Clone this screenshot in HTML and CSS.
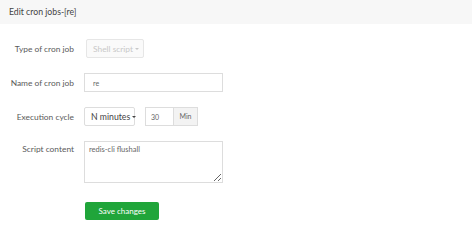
FILE: index.html
```html
<!DOCTYPE html>
<html lang="en">
<head>
    <meta charset="UTF-8">
    <meta name="viewport" content="width=device-width, initial-scale=1.0">
    <title>Edit cron jobs</title>
    <link rel="stylesheet" href="styles.css">
</head>
<body>

    <div class="titulo">Edit cron jobs-[re]</div>

    <form class="formulario">
        <div class="fila">
            <label class="etiqueta">Type of cron job</label>
            <button type="button" class="selector tipo deshabilitado" disabled>Shell script <span class="flecha"></span></button>
        </div>
        <div class="fila">
            <label class="etiqueta">Name of cron job</label>
            <input type="text" class="campo nombre" value="re">
        </div>
        <div class="fila">
            <label class="etiqueta">Execution cycle</label>
            <button type="button" class="selector ciclo">N minutes <span class="flecha"></span></button>
            <div class="grupo">
                <input type="text" class="campo minutos" value="30">
                <span class="unidad">Min</span>
            </div>
        </div>
        <div class="fila arriba">
            <label class="etiqueta texto">Script content</label>
            <textarea class="campo contenido">redis-cli flushall</textarea>
        </div>
        <div class="fila boton-fila">
            <button type="submit" class="guardar">Save changes</button>
        </div>
    </form>

</body>
</html>
```

FILE: styles.css
```css
body {
    margin: 0;
    padding: 0;
    background-color: #fff;
    font-family: Lato, "Open Sans", Arial, sans-serif;
    font-size: 9px;
    color: #555;
}
.titulo {
    height: 24px;
    line-height: 24px;
    margin-right: 2px;
    padding-left: 9px;
    background-color: #f7f7f7;
    color: #444;
    font-size: 8.7px;
}
.formulario {
    padding-top: 15px;
}
.fila {
    display: flex;
    align-items: center;
    margin-bottom: 15px;
}
.fila.arriba {
    align-items: flex-start;
}
.etiqueta {
    width: 84px;
    padding-right: 10px;
    box-sizing: border-box;
    text-align: right;
    white-space: nowrap;
    font-size: 8.4px;
    color: #5a5a5a;
    flex-shrink: 0;
}
.etiqueta.texto {
    padding-top: 3px;
}
.selector {
    height: 19px;
    padding: 0 0 0 6px;
    border: 1px solid #ddd;
    border-radius: 2px;
    background-color: #fff;
    font-family: inherit;
    font-size: 8.7px;
    color: #444;
    display: flex;
    align-items: center;
    gap: 2px;
    white-space: nowrap;
    box-sizing: border-box;
}
.selector.tipo {
    width: 58px;
    margin-left: 2px;
    font-size: 8.4px;
}
.selector.ciclo {
    width: 51px;
}
.selector.deshabilitado {
    color: #c8c8c8;
    background-color: #fafafa;
    border-color: #e6e6e6;
}
.flecha {
    width: 0;
    height: 0;
    border-left: 2px solid transparent;
    border-right: 2px solid transparent;
    border-top: 2.5px solid currentColor;
}
.campo {
    height: 19px;
    box-sizing: border-box;
    border: 1px solid #ddd;
    padding: 0 8px;
    font-family: inherit;
    font-size: 7px;
    color: #666;
    outline: none;
}
.nombre {
    width: 139px;
}
.grupo {
    display: flex;
    margin-left: 10px;
}
.minutos {
    width: 29px;
    padding: 0 5px;
}
.unidad {
    width: 24px;
    height: 19px;
    line-height: 17px;
    box-sizing: border-box;
    border: 1px solid #ddd;
    border-left: none;
    background-color: #f3f3f3;
    text-align: center;
    font-size: 7px;
    color: #666;
}
.contenido {
    width: 139px;
    height: 42px;
    padding: 3px 4px;
    resize: both;
    font-size: 7.5px;
}
.boton-fila {
    padding-left: 85px;
    margin-top: 19px;
}
.guardar {
    width: 74px;
    height: 18px;
    border: none;
    border-radius: 2px;
    background-color: #20a53a;
    color: #fff;
    font-family: inherit;
    font-size: 8px;
    cursor: pointer;
}
.guardar:hover {
    background-color: #10952a;
}
```
